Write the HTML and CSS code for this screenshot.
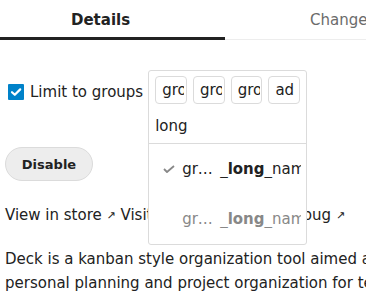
FILE: index.html
```html
<!DOCTYPE html>
<html lang="en">
<head>
<meta charset="utf-8">
<title>App details</title>
<link rel="stylesheet" href="styles.css">
</head>
<body>
<div class="sidebar">
  <nav class="tabs">
    <div class="tab active">Details</div>
    <div class="tab other">Changelog</div>
  </nav>
  <div class="content">
    <div class="groups-row">
      <label class="check">
        <span class="box"><svg viewBox="0 0 16 16" width="16" height="16"><path d="M4 8.2l2.8 2.6L12.2 5.4" fill="none" stroke="#fff" stroke-width="2.2" stroke-linecap="round" stroke-linejoin="round"/></svg></span>
        Limit to groups
      </label>
      <div class="select">
        <div class="dropdown">
          <div class="tags">
            <span class="tag"><span class="tag-text">group_one</span></span>
            <span class="tag"><span class="tag-text">group_two</span></span>
            <span class="tag"><span class="tag-text">group_three</span></span>
            <span class="tag"><span class="tag-text short">admin</span></span>
          </div>
          <div class="search">long</div>
          <ul class="options">
            <li class="option selected"><svg class="tick" viewBox="0 0 12 8" width="12" height="8"><path d="M1 4l3 3 7-6" fill="none" stroke="#888" stroke-width="1.8" stroke-linejoin="round"/></svg><span class="opt-text"><span class="head">gr…</span>_<b>long</b>_name</span></li>
            <li class="option"><span class="opt-text"><span class="head">gr…</span>_<b>long</b>_name</span></li>
          </ul>
        </div>
      </div>
    </div>
    <button class="btn">Disable</button>
    <p class="links"><a href="#">View in store <span class="arrow">↗</span></a> <a href="#">Visit website <span class="arrow">↗</span></a> <a href="#">Report a bug <span class="arrow">↗</span></a></p>
    <p class="desc">Deck is a kanban style organization tool aimed at personal planning and project organization for teams integrated with Nextcloud.</p>
  </div>
</div>
</body>
</html>
```
FILE: styles.css
```css
* { box-sizing: border-box; }
html, body { margin: 0; padding: 0; overflow: hidden; background: #fff; }
body {
  font-family: "DejaVu Sans", sans-serif;
  font-size: 15px;
  color: #222;
  width: 366px;
  height: 299px;
}
.sidebar { width: 450px; }
.tabs { display: flex; height: 40px; }
.tab {
  width: 225px;
  line-height: 38px;
  border-bottom: 1px solid #ededed;
  white-space: nowrap;
  overflow: hidden;
}
.tab.active {
  font-weight: bold;
  padding-left: 71px;
  border-bottom: 3px solid #222;
  line-height: 40px;
  height: 40px;
}
.tab.other { padding-left: 85px; color: #6b6b6b; height: 40px; line-height: 40px; }
.content { padding: 0 5px; width: 440px; }
.groups-row {
  display: flex;
  align-items: center;
  height: 32px;
  margin-top: 36px;
}
.check { display: flex; align-items: center; gap: 6px; margin-left: 3px; }
.box {
  width: 16px; height: 16px;
  background: #0082c9;
  border-radius: 1px;
  display: flex;
}
.select { position: relative; align-self: flex-start; width: 159px; margin-left: 5px; height: 32px; }
.dropdown {
  position: absolute;
  top: -6px; left: 0;
  width: 159px;
  background: #fff;
  border: 1px solid #dbdbdb;
  border-radius: 3px;
  z-index: 2;
}
.tags { display: flex; gap: 6px; padding: 5px 6px 0; }
.tag {
  width: 32px; height: 28px;
  border: 1px solid #dbdbdb;
  border-radius: 4px;
  padding-left: 6px;
  line-height: 26px;
  display: block;
}
.tag-text { display: block; width: 22px; overflow: hidden; white-space: nowrap; }
.tag-text.short { width: 19px; }
.search { height: 39px; padding: 10px 0 0 6px; line-height: 24px; }
.options { list-style: none; margin: 0; padding: 0; border-top: 1px solid #dbdbdb; }
.option {
  height: 50px;
  display: flex;
  align-items: center;
  padding-left: 33px;
  white-space: nowrap;
  overflow: hidden;
  color: #888;
}
.option.selected { padding-left: 14px; color: #222; }
.tick { margin-right: 7px; flex: none; }
.opt-text { display: block; width: 119px; overflow: hidden; }
.head { display: inline-block; width: 38px; }
.btn {
  display: block;
  margin-top: 39px;
  width: 88px; height: 34px;
  border: 1px solid #dbdbdb;
  border-radius: 17px;
  background: #ededed;
  font-family: inherit;
  font-size: 13px;
  font-weight: bold;
  color: #222;
  padding: 0;
}
.links { margin: 22px 0 0; line-height: 24px; white-space: nowrap; }
.links a { color: #222; text-decoration: none; }
.arrow { font-size: 11px; vertical-align: 1px; }
.desc { margin: 19px 0 0; line-height: 24px; }
```
